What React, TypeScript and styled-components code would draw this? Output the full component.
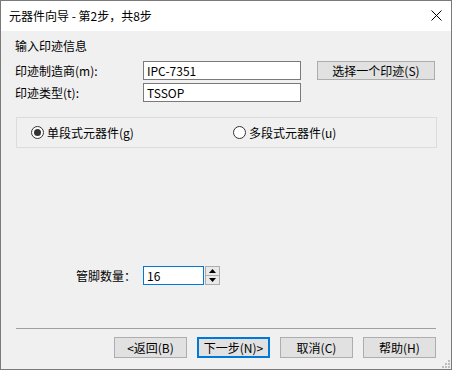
import * as React from "react";
import styled, { createGlobalStyle, css } from "styled-components";

const GlobalStyle = createGlobalStyle`
  html, body {
    margin: 0;
    padding: 0;
    background: #ffffff;
  }
  * {
    box-sizing: border-box;
  }
`;

const fontStack = `"Noto Sans CJK SC", "Noto Sans", sans-serif`;

const Window = styled.div`
  position: relative;
  width: 452px;
  height: 370px;
  border: 1px solid #7a7a7a;
  display: flex;
  flex-direction: column;
  font-family: ${fontStack};
  font-size: 12px;
  color: #000;
`;

const TitleBar = styled.div`
  height: 30px;
  background: #ffffff;
  display: flex;
  align-items: center;
  justify-content: space-between;
  padding: 0 9px 1px 8px;
`;

const TitleText = styled.span`
  font-size: 12px;
  line-height: 16px;
`;

const CloseButton = styled.div`
  width: 12px;
  height: 12px;
  display: flex;
  align-items: center;
  justify-content: center;
`;

const Body = styled.div`
  flex: 1;
  background: #f0f0f0;
  display: flex;
  flex-direction: column;
  padding: 7px 14px 11px 14px;
`;

const Heading = styled.div`
  line-height: 16px;
  height: 16px;
`;

const Form = styled.div`
  margin-top: 7px;
  display: grid;
  grid-template-columns: 112px 158px 118px;
  column-gap: 16px;
  row-gap: 3px;
  align-items: center;
`;

const Label = styled.span`
  line-height: 16px;
  white-space: nowrap;
`;

const TextBox = styled.div<{ focused?: boolean }>`
  height: 19px;
  background: #fff;
  border: 1px solid #7a7a7a;
  padding: 0 3px;
  line-height: 17px;
  font-size: 12px;
  ${props =>
    props.focused &&
    css`
      border-color: #0078d7;
    `}
`;

const Button = styled.div<{ primary?: boolean }>`
  height: 19px;
  background: #e1e1e1;
  border: 1px solid #adadad;
  display: flex;
  align-items: center;
  justify-content: center;
  line-height: 16px;
  white-space: nowrap;
  ${props =>
    props.primary &&
    css`
      border: 2px solid #0078d7;
    `}
`;

const GroupBox = styled.div`
  margin: 15px 0 0 1px;
  width: 421px;
  height: 31px;
  border: 1px solid #dcdcdc;
  display: grid;
  grid-template-columns: 202px 1fr;
  align-items: center;
  padding-left: 14px;
`;

const RadioOption = styled.label`
  display: flex;
  align-items: center;
  gap: 3px;
  line-height: 16px;
`;

const RadioCircle = styled.span<{ checked?: boolean }>`
  width: 13px;
  height: 13px;
  border-radius: 50%;
  border: 1px solid #333;
  background: #fff;
  display: flex;
  align-items: center;
  justify-content: center;
  &::after {
    content: "";
    width: 7px;
    height: 7px;
    border-radius: 50%;
    background: ${props => (props.checked ? "#333" : "transparent")};
  }
`;

const Spacer = styled.div`
  flex: 1;
`;

const PinRow = styled.div`
  display: flex;
  align-items: center;
  padding-left: 61px;
`;

const PinLabel = styled.span`
  width: 67px;
  line-height: 16px;
`;

const SpinBox = styled(TextBox)`
  width: 61px;
`;

const SpinButtons = styled.div`
  width: 15px;
  height: 19px;
  margin-left: 1px;
  border: 1px solid #adadad;
  background: #adadad;
  display: flex;
  flex-direction: column;
  gap: 1px;
`;

const SpinArrow = styled.div`
  flex: 1;
  background: #e9e9e9;
  display: flex;
  align-items: center;
  justify-content: center;
`;

const Separator = styled.div`
  margin: 43px 0 0 1px;
  width: 420px;
  height: 1px;
  background: #a0a0a0;
`;

const ButtonBar = styled.div`
  margin-top: 8px;
  display: flex;
  justify-content: flex-end;
  gap: 10px;
  padding-right: 1px;
`;

const FooterButton = styled(Button)`
  width: 73px;
  height: 21px;
`;

const Grip = styled.svg`
  position: absolute;
  right: 1px;
  bottom: 1px;
`;

const Triangle: React.FC<{ up?: boolean }> = ({ up }) => (
  <svg width="7" height="4" viewBox="0 0 7 4">
    <polygon points={up ? "3.5,0 7,4 0,4" : "0,0 7,0 3.5,4"} fill="#000" />
  </svg>
);

const Radio: React.FC<{ checked?: boolean; label: string }> = ({ checked, label }) => (
  <RadioOption>
    <RadioCircle checked={checked} />
    {label}
  </RadioOption>
);

export default function App() {
  return (
    <>
      <GlobalStyle />
      <Window>
        <TitleBar>
          <TitleText>元器件向导 - 第2步，共8步</TitleText>
          <CloseButton>
            <svg width="11" height="11" viewBox="0 0 11 11">
              <path d="M0.5 0.5 L10.5 10.5 M10.5 0.5 L0.5 10.5" stroke="#000" strokeWidth="1" />
            </svg>
          </CloseButton>
        </TitleBar>
        <Body>
          <Heading>输入印迹信息</Heading>
          <Form>
            <Label>印迹制造商(m):</Label>
            <TextBox>IPC-7351</TextBox>
            <Button>选择一个印迹(S)</Button>
            <Label>印迹类型(t):</Label>
            <TextBox>TSSOP</TextBox>
            <span />
          </Form>
          <GroupBox>
            <Radio checked label="单段式元器件(g)" />
            <Radio label="多段式元器件(u)" />
          </GroupBox>
          <Spacer />
          <PinRow>
            <PinLabel>管脚数量：</PinLabel>
            <SpinBox focused>16</SpinBox>
            <SpinButtons>
              <SpinArrow>
                <Triangle up />
              </SpinArrow>
              <SpinArrow>
                <Triangle />
              </SpinArrow>
            </SpinButtons>
          </PinRow>
          <Separator />
          <ButtonBar>
            <FooterButton>&lt;返回(B)</FooterButton>
            <FooterButton primary>下一步(N)&gt;</FooterButton>
            <FooterButton>取消(C)</FooterButton>
            <FooterButton>帮助(H)</FooterButton>
          </ButtonBar>
        </Body>
        <Grip width="8" height="8" viewBox="0 0 8 8">
          <rect x="6" y="0" width="2" height="2" fill="#bdbdbd" />
          <rect x="3" y="3" width="2" height="2" fill="#bdbdbd" />
          <rect x="6" y="3" width="2" height="2" fill="#bdbdbd" />
          <rect x="0" y="6" width="2" height="2" fill="#bdbdbd" />
          <rect x="3" y="6" width="2" height="2" fill="#bdbdbd" />
          <rect x="6" y="6" width="2" height="2" fill="#bdbdbd" />
        </Grip>
      </Window>
    </>
  );
}
